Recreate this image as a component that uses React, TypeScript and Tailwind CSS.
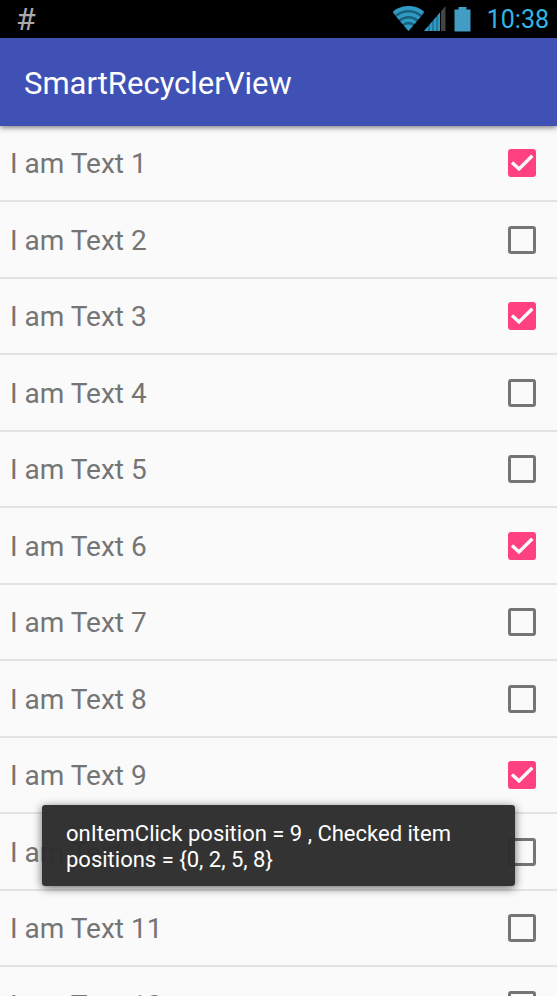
import { useState } from "react";

const items = Array.from({ length: 12 }, (_, index) => `I am Text ${index + 1}`);

function WifiIcon() {
  return (
    <svg width="32" height="26" viewBox="0 0 32 26" fill="none" aria-hidden="true">
      <path d="M1 7C9 -1 24 -1 32 7L16.5 25Z" fill="#18607d" />
      <path d="M2 7.2C10.5 0.2 22.5 0.2 31 7.2" stroke="#2f9ac4" strokeWidth="4" />
      <path d="M5.6 12.2C12.2 6.9 20.8 6.9 27.4 12.2" stroke="#2f9ac4" strokeWidth="3.6" />
      <path d="M9.4 16.8C13.7 13.3 19.3 13.3 23.6 16.8" stroke="#2f9ac4" strokeWidth="3.4" />
      <path d="M12 19.8C14.7 17.9 18.3 17.9 21 19.8L16.5 25Z" fill="#2f9ac4" />
    </svg>
  );
}

function SignalIcon() {
  return (
    <svg width="22" height="26" viewBox="0 0 22 26" aria-hidden="true">
      <path d="M0 25L16 6.5V25Z" fill="#175a76" />
      <path d="M0 25L4.5 19.8V25Z M5.5 25V18.7L8.5 15.2V25Z M9.5 25V14L12.5 10.6V25Z M13.5 25V9.4L16 6.5V25Z" fill="#2f9ac4" />
      <path d="M17 25V5.3L21.5 0V25Z" fill="#444" />
    </svg>
  );
}

function BatteryIcon() {
  return (
    <svg width="17" height="25" viewBox="0 0 17 25" aria-hidden="true">
      <path d="M4.5 0H12.5V2.5H16.5V24.5H0.5V2.5H4.5Z" fill="#429dc4" />
    </svg>
  );
}

function StatusBar() {
  return (
    <header className="flex h-[38px] shrink-0 items-center justify-between bg-black pr-2 pl-4">
      <span className="text-[32px] leading-9 text-[#aaaaaa]">#</span>
      <div className="flex items-center">
        <WifiIcon />
        <SignalIcon />
        <span className="ml-2">
          <BatteryIcon />
        </span>
        <time className="ml-4 pt-[2px] text-[25px] leading-9 text-[#33b5e5]">10:38</time>
      </div>
    </header>
  );
}

type RowProps = {
  label: string;
  checked: boolean;
  onToggle: () => void;
};

function Row({ label, checked, onToggle }: RowProps) {
  return (
    <li className="shrink-0 border-b-2 border-[#e3e3e3] odd:h-[76px] even:h-[77px]">
      <label className="flex h-full items-center justify-between pr-[21px] pl-[10px]">
        <span className="pt-[2px] text-[28px] leading-8 text-[#757575]">{label}</span>
        <span className="grid size-7">
          <input
            type="checkbox"
            checked={checked}
            onChange={onToggle}
            className="col-start-1 row-start-1 size-7 appearance-none rounded-[3px] border-3 border-[#757575] checked:border-[#ff4081] checked:bg-[#ff4081]"
          />
          {checked && (
            <svg className="pointer-events-none col-start-1 row-start-1 size-7" viewBox="0 0 28 28" fill="none" aria-hidden="true">
              <path d="M4 13.5L11 20L24.3 6.7" stroke="#fafafa" strokeWidth="3.4" />
            </svg>
          )}
        </span>
      </label>
    </li>
  );
}

export default function App() {
  const [checked, setChecked] = useState([0, 2, 5, 8]);
  const [position, setPosition] = useState(9);

  const toggle = (index: number) => {
    setPosition(index + 1);
    setChecked((prev) =>
      prev.includes(index) ? prev.filter((i) => i !== index) : [...prev, index].sort((a, b) => a - b)
    );
  };

  return (
    <div className="relative flex h-screen flex-col overflow-hidden bg-[#fafafa] font-['Roboto',sans-serif]">
      <StatusBar />

      {/* Toolbar */}
      <div className="z-10 flex h-[88px] shrink-0 items-center bg-[#3f51b5] px-6 pt-[3px] shadow-[0_1px_6px_rgba(0,0,0,0.6)]">
        <h1 className="text-[31px] leading-9 text-white">SmartRecyclerView</h1>
      </div>

      <ul className="flex min-h-0 flex-1 flex-col overflow-hidden">
        {items.map((label, index) => (
          <Row key={label} label={label} checked={checked.includes(index)} onToggle={() => toggle(index)} />
        ))}
      </ul>

      {/* Toast */}
      <div
        role="status"
        className="absolute inset-x-[42px] bottom-[110px] z-20 rounded-[3px] bg-[#2c2c2c]/97 px-6 pt-4 pb-[13px] shadow-[0_2px_10px_rgba(0,0,0,0.6)]"
      >
        <p className="max-w-[400px] text-[22px] leading-[26px] text-white">
          {`onItemClick position = ${position} , Checked item positions = {${checked.join(", ")}}`}
        </p>
      </div>
    </div>
  );
}
